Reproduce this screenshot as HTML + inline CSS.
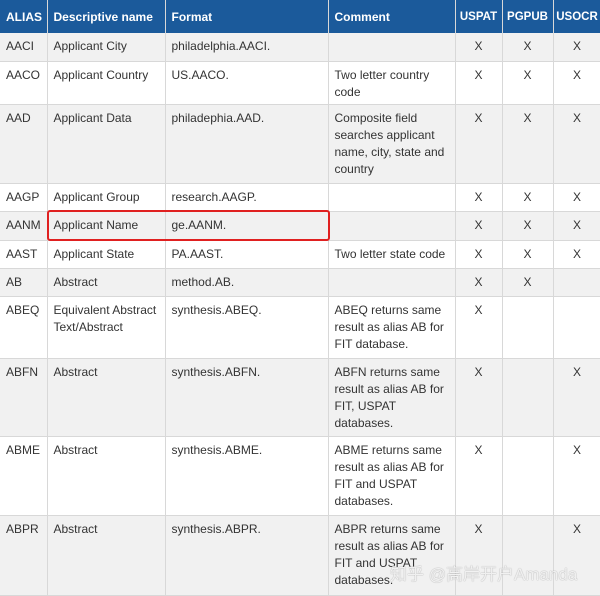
<!DOCTYPE html><html><head><style>
body{margin:0;width:600px;height:595px;overflow:hidden;background:#fff;font-family:"Liberation Sans",sans-serif;font-size:12px;color:#333;position:relative}
table{border-collapse:collapse;table-layout:fixed;width:601px;position:absolute;left:0;top:0}
th{background:#1b5a9b;color:#fff;font-weight:bold;text-align:left;height:33px;padding:0 6px;border-right:1px solid #d8d8d8;font-size:12px}
th.c{padding:0 2px;font-size:11.5px}
td{vertical-align:top;padding:5px 6px 0;line-height:17px;border-right:1px solid #d8d8d8;border-bottom:1px solid #d8d8d8}
tr.g td{background:#f1f1f1}
td.c,th.c{text-align:center}
.box{position:absolute;left:47px;top:210px;width:279px;height:27px;border:2px solid #e02020;border-radius:3px}
.wm{position:absolute;left:390px;top:560px;font-family:"Liberation Sans","Noto Sans CJK SC",sans-serif;font-size:17px;color:rgba(255,255,255,.85);text-shadow:0 0 1px #888}
</style></head><body>
<table>
<colgroup><col style="width:47px"><col style="width:118px"><col style="width:163px"><col style="width:127px"><col style="width:47px"><col style="width:51px"><col style="width:48px"></colgroup>
<tr><th>ALIAS</th><th>Descriptive name</th><th>Format</th><th>Comment</th><th class="c">USPAT</th><th class="c">PGPUB</th><th class="c">USOCR</th></tr>
<tr class="g" style="height:28px"><td>AACI</td><td>Applicant City</td><td>philadelphia.AACI.</td><td></td><td class="c">X</td><td class="c">X</td><td class="c">X</td></tr>
<tr style="height:43px"><td>AACO</td><td>Applicant Country</td><td>US.AACO.</td><td>Two letter country code</td><td class="c">X</td><td class="c">X</td><td class="c">X</td></tr>
<tr class="g" style="height:79px"><td>AAD</td><td>Applicant Data</td><td>philadephia.AAD.</td><td>Composite field searches applicant name, city, state and country</td><td class="c">X</td><td class="c">X</td><td class="c">X</td></tr>
<tr style="height:28px"><td>AAGP</td><td>Applicant Group</td><td>research.AAGP.</td><td></td><td class="c">X</td><td class="c">X</td><td class="c">X</td></tr>
<tr class="g" style="height:29px"><td>AANM</td><td>Applicant Name</td><td>ge.AANM.</td><td></td><td class="c">X</td><td class="c">X</td><td class="c">X</td></tr>
<tr style="height:28px"><td>AAST</td><td>Applicant State</td><td>PA.AAST.</td><td>Two letter state code</td><td class="c">X</td><td class="c">X</td><td class="c">X</td></tr>
<tr class="g" style="height:28px"><td>AB</td><td>Abstract</td><td>method.AB.</td><td></td><td class="c">X</td><td class="c">X</td><td></td></tr>
<tr style="height:62px"><td>ABEQ</td><td>Equivalent Abstract Text/Abstract</td><td>synthesis.ABEQ.</td><td>ABEQ returns same result as alias AB for FIT database.</td><td class="c">X</td><td></td><td></td></tr>
<tr class="g" style="height:78px"><td>ABFN</td><td>Abstract</td><td>synthesis.ABFN.</td><td>ABFN returns same result as alias AB for FIT, USPAT databases.</td><td class="c">X</td><td></td><td class="c">X</td></tr>
<tr style="height:79px"><td>ABME</td><td>Abstract</td><td>synthesis.ABME.</td><td>ABME returns same result as alias AB for FIT and USPAT databases.</td><td class="c">X</td><td></td><td class="c">X</td></tr>
<tr class="g" style="height:80px"><td>ABPR</td><td>Abstract</td><td>synthesis.ABPR.</td><td>ABPR returns same result as alias AB for FIT and USPAT databases.</td><td class="c">X</td><td></td><td class="c">X</td></tr>
</table>
<div class="box"></div>
<div class="wm">知乎 @高岸开户Amanda</div>
</body></html>
